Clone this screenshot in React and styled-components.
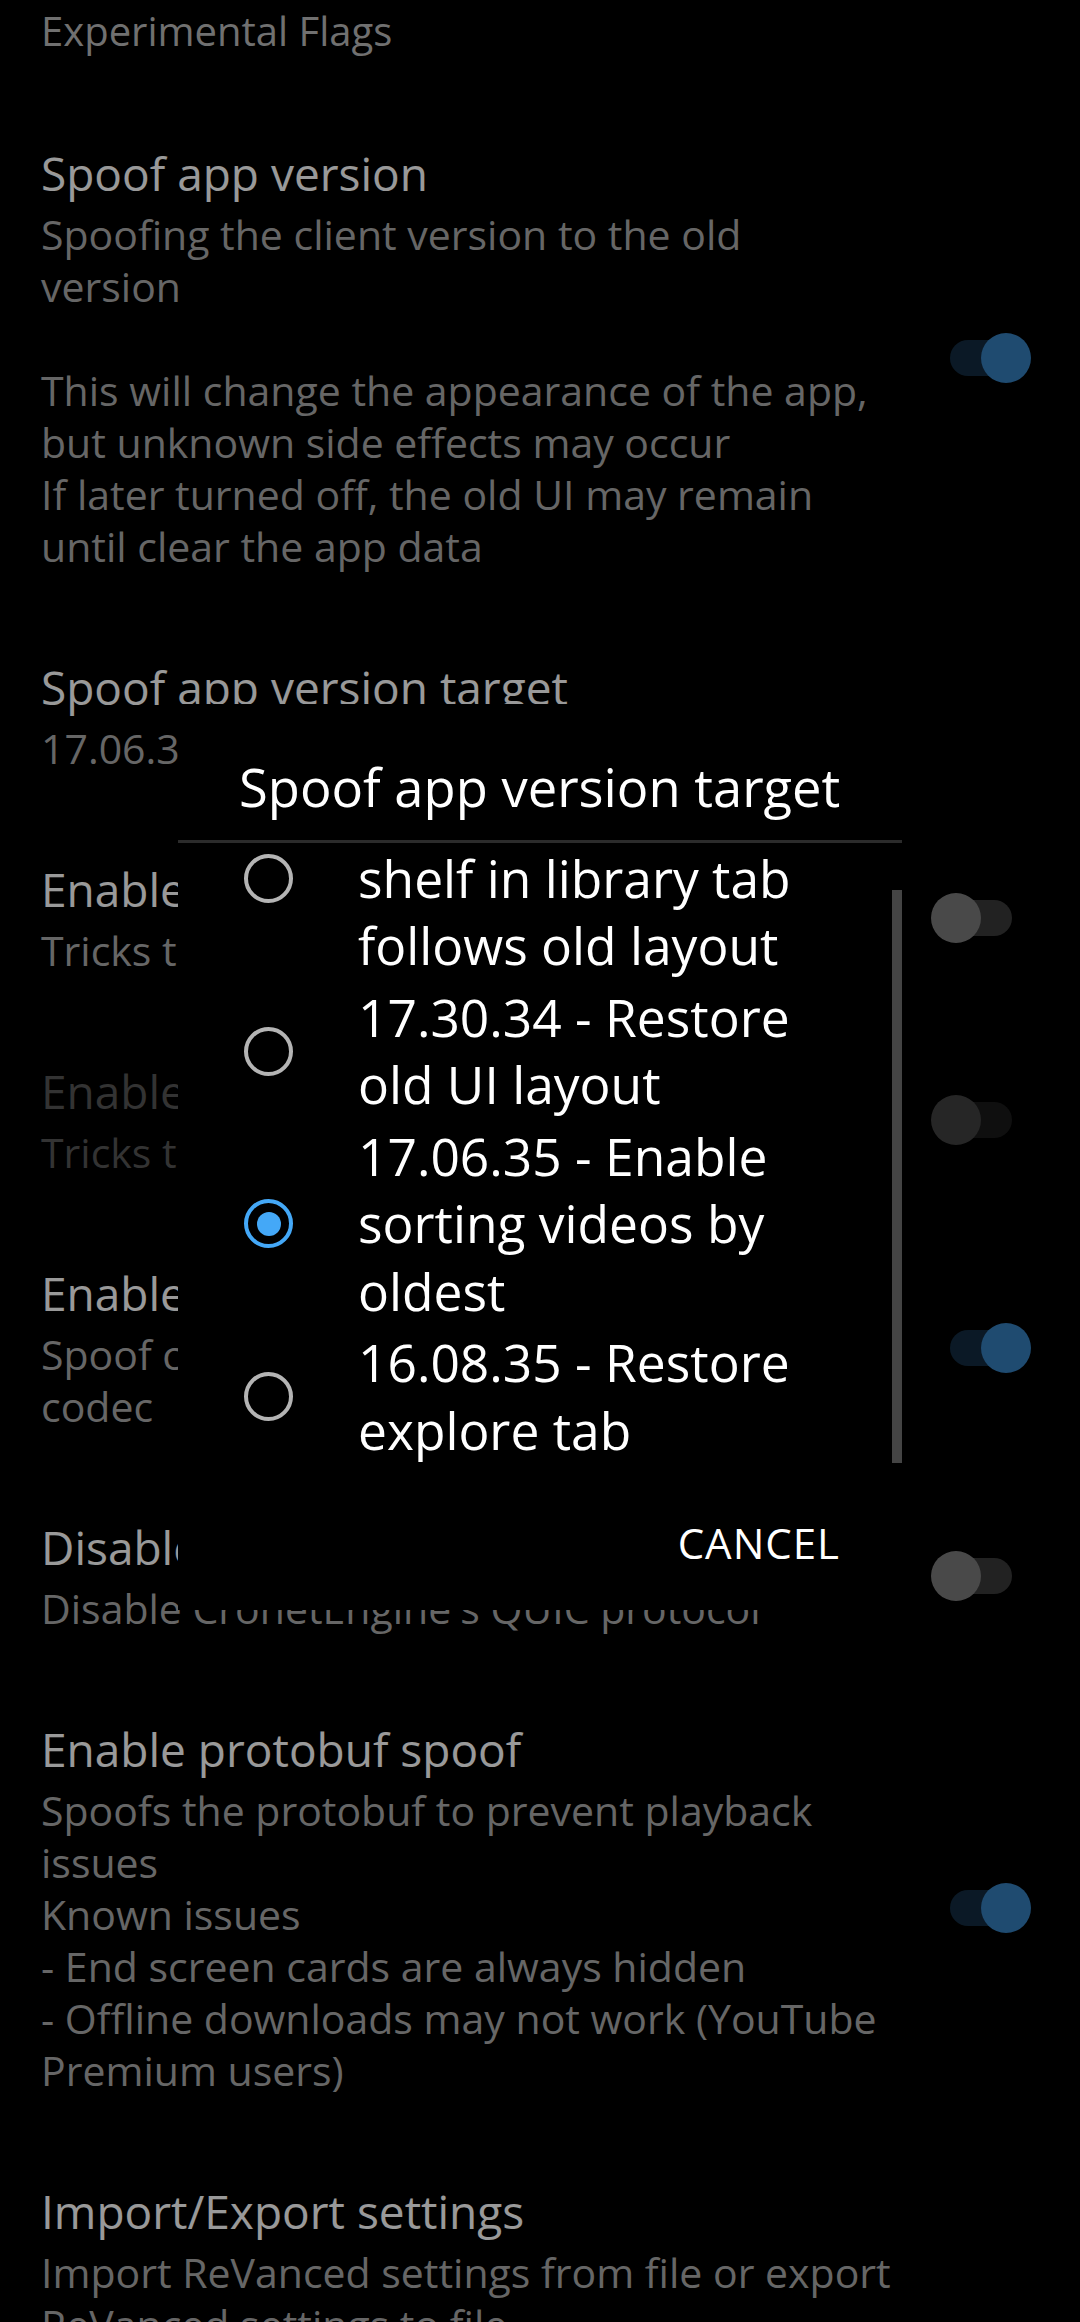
import React from 'react';
import styled, { createGlobalStyle } from 'styled-components';

const GlobalStyle = createGlobalStyle`
  html, body {
    margin: 0;
    padding: 0;
    background: #000;
    overflow: hidden;
  }
  body {
    font-family: 'Open Sans', 'Noto Sans', sans-serif;
    -webkit-font-smoothing: antialiased;
  }
`;

const Screen = styled.div`
  position: relative;
  width: 1080px;
  height: 2322px;
  overflow: hidden;
  background: #000;
`;

const Category = styled.div`
  padding: 6px 41px 45px;
  font-size: 40px;
  line-height: 50px;
  color: #bbb;
`;

const Row = styled.div`
  display: flex;
  align-items: center;
  padding: 43px 49px 43px 41px;
`;

const Texts = styled.div`
  flex: 1;
  min-width: 0;
`;

const Title = styled.div`
  font-size: 46px;
  line-height: 58px;
  white-space: nowrap;
  color: ${(p) => (p.$disabled ? '#555' : '#fff')};
`;

const Summary = styled.div`
  margin-top: 6px;
  font-size: 41px;
  line-height: 52px;
  white-space: pre-line;
  color: ${(p) => (p.$disabled ? '#555' : '#aaa')};
`;

const SwitchBox = styled.div`
  position: relative;
  flex: none;
  width: 100px;
  height: 50px;
  margin-left: 51px;
`;

const Track = styled.div`
  position: absolute;
  left: 19px;
  right: 19px;
  top: 7px;
  height: 36px;
  border-radius: 18px;
  background: ${(p) => (p.$on ? '#132b40' : p.$disabled ? '#1a1a1a' : '#3a3a3a')};
`;

const Thumb = styled.div`
  position: absolute;
  top: 0;
  left: ${(p) => (p.$on ? 50 : 0)}px;
  width: 50px;
  height: 50px;
  border-radius: 50%;
  background: ${(p) => (p.$on ? '#347dbb' : p.$disabled ? '#404040' : '#7b7b7b')};
`;

const Scrim = styled.div`
  position: absolute;
  inset: 0;
  box-sizing: border-box;
  padding-bottom: 8px;
  display: flex;
  align-items: center;
  justify-content: center;
  background: rgba(0, 0, 0, 0.4);
`;

const Dialog = styled.div`
  width: 724px;
  display: flex;
  flex-direction: column;
  background: #000;
`;

const DialogTitle = styled.div`
  padding: 49px 61px 19px;
  font-size: 52.5px;
  line-height: 68px;
  color: #fff;
`;

const Divider = styled.div`
  height: 3px;
  background: #2b2b2b;
`;

const ListViewport = styled.div`
  position: relative;
  height: 620px;
  overflow: hidden;
`;

const ListContent = styled.div`
  margin-top: ${(p) => -p.$scroll}px;
`;

const Option = styled.div`
  display: flex;
  align-items: center;
  padding: 2px 60px 2px 66px;
`;

const Radio = styled.span`
  flex: none;
  box-sizing: border-box;
  width: 49px;
  height: 49px;
  border-radius: 50%;
  border: 4px solid ${(p) => (p.$checked ? '#44a8f7' : '#b4b4b4')};
  display: flex;
  align-items: center;
  justify-content: center;

  &::after {
    content: '';
    display: ${(p) => (p.$checked ? 'block' : 'none')};
    width: 24px;
    height: 24px;
    border-radius: 50%;
    background: #44a8f7;
  }
`;

const OptionLabel = styled.div`
  flex: 1;
  margin-left: 65px;
  font-size: 51.5px;
  line-height: 67.5px;
  color: #fff;
`;

const ScrollThumb = styled.div`
  position: absolute;
  right: 0;
  top: 47px;
  bottom: 0;
  width: 10px;
  background: #444;
`;

const ButtonBar = styled.div`
  display: flex;
  justify-content: flex-end;
  padding: 35px 42px 24px;
`;

const TextButton = styled.button`
  height: 88px;
  padding: 0 20px;
  border: 0;
  background: none;
  font-family: inherit;
  font-size: 42px;
  font-weight: 500;
  letter-spacing: 1px;
  color: #fff;
`;

const settings = [
  {
    title: 'Spoof app version',
    summary:
      'Spoofing the client version to the old\nversion\n\nThis will change the appearance of the app,\nbut unknown side effects may occur\nIf later turned off, the old UI may remain\nuntil clear the app data',
    on: true,
  },
  { title: 'Spoof app version target', summary: '17.06.35' },
  { title: 'Enable phone layout', summary: 'Tricks the dpi to use some phone layouts', on: false },
  {
    title: 'Enable tablet layout',
    summary: 'Tricks the dpi to use some tablet layouts',
    on: false,
    disabled: true,
  },
  { title: 'Enable VP9 codec', summary: 'Spoof codec information to enable VP9\ncodec', on: true },
  { title: 'Disable QUIC protocol', summary: "Disable CronetEngine's QUIC protocol", on: false },
  {
    title: 'Enable protobuf spoof',
    summary:
      'Spoofs the protobuf to prevent playback\nissues\nKnown issues\n- End screen cards are always hidden\n- Offline downloads may not work (YouTube\nPremium users)',
    on: true,
  },
  {
    title: 'Import/Export settings',
    summary: 'Import ReVanced settings from file or export\nReVanced settings to file',
  },
];

const targets = [
  '17.41.37 - Playlist shelf in library tab follows old layout',
  '17.30.34 - Restore old UI layout',
  '17.06.35 - Enable sorting videos by oldest',
  '16.08.35 - Restore explore tab',
];

const Switch = ({ on, disabled }) => (
  <SwitchBox>
    <Track $on={on} $disabled={disabled} />
    <Thumb $on={on} $disabled={disabled} />
  </SwitchBox>
);

export default function App() {
  return (
    <Screen>
      <GlobalStyle />
      <Category>Experimental Flags</Category>
      {settings.map((s) => (
        <Row key={s.title}>
          <Texts>
            <Title $disabled={s.disabled}>{s.title}</Title>
            <Summary $disabled={s.disabled}>{s.summary}</Summary>
          </Texts>
          {s.on !== undefined && <Switch on={s.on} disabled={s.disabled} />}
        </Row>
      ))}

      <Scrim>
        <Dialog>
          <DialogTitle>Spoof app version target</DialogTitle>
          <Divider />
          <ListViewport>
            <ListContent $scroll={68}>
              {targets.map((t) => (
                <Option key={t}>
                  <Radio $checked={t.startsWith('17.06.35')} />
                  <OptionLabel>{t}</OptionLabel>
                </Option>
              ))}
            </ListContent>
            <ScrollThumb />
          </ListViewport>
          <ButtonBar>
            <TextButton>CANCEL</TextButton>
          </ButtonBar>
        </Dialog>
      </Scrim>
    </Screen>
  );
}
